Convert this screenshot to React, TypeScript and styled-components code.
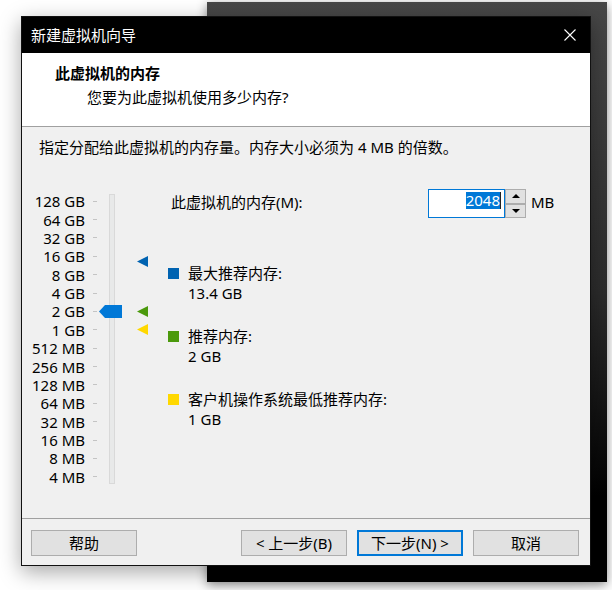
import React from "react";
import styled, { createGlobalStyle } from "styled-components";

const GlobalStyle = createGlobalStyle`
  html, body {
    margin: 0;
    padding: 0;
    background: #fff;
  }
`;

const ROW_H = 18.38;

const scale = [
  "128 GB", "64 GB", "32 GB", "16 GB", "8 GB", "4 GB", "2 GB", "1 GB",
  "512 MB", "256 MB", "128 MB", "64 MB", "32 MB", "16 MB", "8 MB", "4 MB",
];

const legend = [
  { color: "#0063b1", title: "最大推荐内存:", value: "13.4 GB", mb: 13721.6 },
  { color: "#4b990c", title: "推荐内存:", value: "2 GB", mb: 2048 },
  { color: "#ffd800", title: "客户机操作系统最低推荐内存:", value: "1 GB", mb: 1024 },
];

// centre of a value on the log scale, relative to the slider box
const centerOf = (mb: number) => 3 + ROW_H / 2 + (17 - Math.log2(mb)) * ROW_H;

const Desktop = styled.div`
  position: relative;
  width: 612px;
  height: 590px;
  overflow: hidden;
  background: #fff;
  font-family: "Noto Sans", "Noto Sans CJK SC", sans-serif;
  font-size: 15px;
  color: #000;
`;

const BackWindow = styled.div`
  position: absolute;
  left: 207px;
  top: 2px;
  width: 400px;
  height: 580px;
  background: linear-gradient(#474747, #2c2c2c 50%, #000 86%);
  box-shadow: 0 3px 10px rgba(0, 0, 0, 0.45);
`;

const Dialog = styled.div`
  position: absolute;
  left: 21px;
  top: 16px;
  width: 570px;
  height: 550px;
  box-sizing: border-box;
  border: 1px solid #111;
  background: #f0f0f0;
  display: flex;
  flex-direction: column;
  box-shadow: 0 6px 20px rgba(0, 0, 0, 0.35);
`;

const TitleBar = styled.div`
  height: 36px;
  flex: none;
  background: #000;
  color: #fff;
  display: flex;
  align-items: center;
  justify-content: space-between;
  padding-left: 9px;
  line-height: 20px;
`;

const CloseIcon = styled.svg`
  width: 12px;
  height: 12px;
  margin-right: 14px;
`;

const Header = styled.div`
  height: 74px;
  flex: none;
  box-sizing: border-box;
  background: #fff;
  border-bottom: 1px solid #a0a0a0;
  padding-top: 10px;
`;

const HeaderTitle = styled.div`
  margin-left: 33px;
  line-height: 20px;
  font-weight: 700;
`;

const HeaderSub = styled.div`
  margin-left: 65px;
  margin-top: 4px;
  line-height: 20px;
`;

const Body = styled.div`
  flex: 1;
  padding-top: 10px;
`;

const Intro = styled.div`
  margin-left: 17px;
  line-height: 20px;
`;

const Main = styled.div`
  display: flex;
  margin-top: 32px;
`;

const SliderBox = styled.div`
  position: relative;
  width: 146px;
  flex: none;
  padding-top: 3px;
`;

const ScaleRow = styled.div`
  display: flex;
  align-items: center;
  height: ${ROW_H}px;
`;

const ScaleLabel = styled.span`
  width: 63px;
  text-align: right;
  line-height: 18px;
  white-space: nowrap;
`;

const Tick = styled.span`
  margin-left: 8px;
  width: 4px;
  height: 1px;
  background: #c4c4c4;
`;

const Track = styled.div`
  position: absolute;
  left: 87px;
  top: 5px;
  width: 6px;
  height: 290px;
  box-sizing: border-box;
  border: 1px solid #d9d9d9;
  background: #e8e9e9;
`;

const Thumb = styled.svg`
  position: absolute;
  left: 77px;
  width: 23px;
  height: 13px;
`;

const Marker = styled.svg`
  position: absolute;
  left: 115px;
  width: 11px;
  height: 11px;
`;

const RightPane = styled.div`
  flex: 1;
  display: flex;
  flex-direction: column;
`;

const MemRow = styled.div`
  display: flex;
  align-items: flex-start;
  height: 29px;
`;

const MemLabel = styled.span`
  margin-left: 3px;
  width: 257px;
  padding-top: 3px;
  line-height: 20px;
`;

const Input = styled.div`
  width: 77px;
  height: 29px;
  box-sizing: border-box;
  border: 1px solid #0078d7;
  background: #fff;
  display: flex;
  justify-content: flex-end;
  align-items: flex-start;
  padding: 2px 3px 0 0;
`;

const Selected = styled.span`
  background: #0078d7;
  color: #fff;
  height: 17px;
  line-height: 17px;
`;

const Caret = styled.span`
  width: 1px;
  height: 17px;
  background: #222;
`;

const Spin = styled.div`
  width: 21px;
  height: 29px;
  display: flex;
  flex-direction: column;
`;

const SpinButton = styled.div`
  flex: 1;
  box-sizing: border-box;
  border: 1px solid #adadad;
  background: #e1e1e1;
  display: flex;
  align-items: center;
  justify-content: center;
`;

const Arrow = styled.span<{ $down?: boolean }>`
  width: 0;
  height: 0;
  border-left: 4px solid transparent;
  border-right: 4px solid transparent;
  ${(p) => (p.$down ? "border-top: 4px solid #000;" : "border-bottom: 4px solid #000;")}
`;

const Unit = styled.span`
  margin-left: 5px;
  padding-top: 3px;
  line-height: 20px;
`;

const Legend = styled.div`
  display: flex;
  flex-direction: column;
  gap: 23.3px;
  margin-top: 44.7px;
`;

const LegendItem = styled.div`
  display: grid;
  grid-template-columns: 11px 1fr;
  column-gap: 9px;
  line-height: 20px;
`;

const Swatch = styled.span<{ $color: string }>`
  width: 11px;
  height: 11px;
  margin-top: 5px;
  background: ${(p) => p.$color};
`;

const Footer = styled.div`
  flex: none;
  height: 47px;
  box-sizing: border-box;
  border-top: 1px solid #a0a0a0;
  padding: 11px 11px 9px 9px;
  display: flex;
  gap: 10px;
`;

const Spacer = styled.div`
  flex: 1;
`;

const Button = styled.div<{ $primary?: boolean }>`
  width: 106px;
  height: 26px;
  box-sizing: border-box;
  border: ${(p) => (p.$primary ? "2px solid #0078d7" : "1px solid #adadad")};
  background: #e1e1e1;
  display: flex;
  align-items: center;
  justify-content: center;
  line-height: 20px;
  white-space: nowrap;
`;

export default function App() {
  const thumbCenter = centerOf(2048);

  return (
    <Desktop>
      <GlobalStyle />
      <BackWindow />
      <Dialog>
        <TitleBar>
          <span>新建虚拟机向导</span>
          <CloseIcon viewBox="0 0 12 12">
            <path d="M0.5 0.5 L11.5 11.5 M11.5 0.5 L0.5 11.5" stroke="#fff" strokeWidth="1.1" fill="none" />
          </CloseIcon>
        </TitleBar>

        <Header>
          <HeaderTitle>此虚拟机的内存</HeaderTitle>
          <HeaderSub>您要为此虚拟机使用多少内存?</HeaderSub>
        </Header>

        <Body>
          <Intro>指定分配给此虚拟机的内存量。内存大小必须为 4 MB 的倍数。</Intro>
          <Main>
            <SliderBox>
              {scale.map((s) => (
                <ScaleRow key={s}>
                  <ScaleLabel>{s}</ScaleLabel>
                  <Tick />
                </ScaleRow>
              ))}
              <Track />
              <Thumb viewBox="0 0 23 13" style={{ top: thumbCenter - 6.5 }}>
                <polygon points="0,6.5 6,0 23,0 23,13 6,13" fill="#0078d7" />
              </Thumb>
              {legend.map((l) => (
                <Marker key={l.title} viewBox="0 0 11 11" style={{ top: centerOf(l.mb) - 5.5 }}>
                  <polygon points="0,5.5 11,0 11,11" fill={l.color} />
                </Marker>
              ))}
            </SliderBox>

            <RightPane>
              <MemRow>
                <MemLabel>此虚拟机的内存(M):</MemLabel>
                <Input>
                  <Selected>2048</Selected>
                  <Caret />
                </Input>
                <Spin>
                  <SpinButton>
                    <Arrow />
                  </SpinButton>
                  <SpinButton>
                    <Arrow $down />
                  </SpinButton>
                </Spin>
                <Unit>MB</Unit>
              </MemRow>

              <Legend>
                {legend.map((l) => (
                  <LegendItem key={l.title}>
                    <Swatch $color={l.color} />
                    <span>{l.title}</span>
                    <span />
                    <span>{l.value}</span>
                  </LegendItem>
                ))}
              </Legend>
            </RightPane>
          </Main>
        </Body>

        <Footer>
          <Button>帮助</Button>
          <Spacer />
          <Button>&lt; 上一步(B)</Button>
          <Button $primary>下一步(N) &gt;</Button>
          <Button>取消</Button>
        </Footer>
      </Dialog>
    </Desktop>
  );
}
